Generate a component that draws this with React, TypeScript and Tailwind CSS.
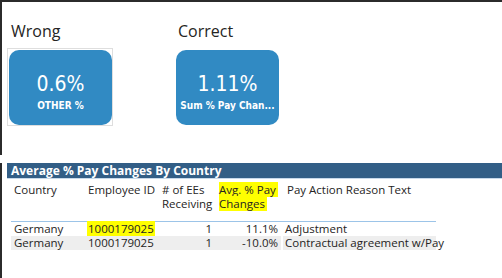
import React from 'react';

const font = { fontFamily: '"Open Sans", "Noto Sans", sans-serif' };

const rows = [
  { country: 'Germany', id: '1000179025', count: '1', avg: '11.1%', reason: 'Adjustment', hl: true, bg: '' },
  { country: 'Germany', id: '1000179025', count: '1', avg: '-10.0%', reason: 'Contractual agreement w/Pay', hl: false, bg: 'bg-[#eeeeee]' },
];

function Card({ value, label, outlined }: { value: string; label: string; outlined?: boolean }) {
  return (
    <div className={`w-[106px] h-[78px] p-px border ${outlined ? 'border-[#dedede]' : 'border-transparent'}`}>
      <div className="w-[103px] h-[75px] rounded-[10px] bg-[#318ac3] flex flex-col items-center text-white pt-[21px] font-['DejaVu_Sans_Condensed',sans-serif]">
        <div className="text-[21px] leading-[26px]">{value}</div>
        <div className="text-[10px] font-bold leading-[14px] mt-[2px] whitespace-nowrap">{label}</div>
      </div>
    </div>
  );
}

export default function App() {
  return (
    <div className="w-[502px] h-[278px] bg-white overflow-hidden border-t-2 border-[#2b2b2b] flex flex-col text-[#252423]" style={font}>
      {/* KPI cards */}
      <div className="h-[153px] border-l-2 border-[#2b2b2b] flex pl-[5px]">
        <div className="w-[167px] pt-[18px]">
          <div className="text-[16px] leading-[22px] pl-[4px] mb-[6px]">Wrong</div>
          <Card value="0.6%" label="OTHER %" outlined />
        </div>
        <div className="pt-[18px]">
          <div className="text-[16px] leading-[22px] pl-[4px] mb-[6px]">Correct</div>
          <Card value="1.11%" label="Sum % Pay Chan..." />
        </div>
      </div>
      <div className="h-[8px]" />
      {/* Table */}
      <div className="flex-1 border-l-2 border-[#2b2b2b] pl-[5px]">
        <div className="h-[15px] bg-[#325e86] text-white font-bold text-[12px] leading-[15px] pl-[4px] whitespace-nowrap">
          Average % Pay Changes By Country
        </div>
        <div className="h-px bg-[#c7d9ea]" />
        <div className="ml-[4px] w-[425px] text-[11.5px]">
          <div className="grid grid-cols-[74px_74px_56px_68px_153px] pt-[4px] h-[43px] leading-[14px] border-b border-[#9cc4e8]">
            <div className="pl-[3px]">Country</div>
            <div className="pl-[3px] whitespace-nowrap">Employee ID</div>
            <div className="pl-[3px] whitespace-nowrap">
              # of EEs
              <br />
              Receiving
            </div>
            <div className="pl-[4px] whitespace-nowrap">
              <span className="bg-[#ffff00] pr-[2px]">Avg. % Pay</span>
              <br />
              <span className="bg-[#ffff00] pr-[2px]">Changes</span>
            </div>
            <div className="pl-[4px] whitespace-nowrap">Pay Action Reason Text</div>
          </div>
          {rows.map((r, i) => (
            <div key={i} className={`grid grid-cols-[74px_74px_56px_68px_153px] h-[14px] leading-[14px] ${r.bg}`}>
              <div className="pl-[3px]">{r.country}</div>
              <div className="pl-[2px]">
                <span className={r.hl ? 'bg-[#ffff00] px-px' : 'px-px'}>{r.id}</span>
              </div>
              <div className="text-right pr-[3px]">{r.count}</div>
              <div className="text-right pr-[3px] border-r-2 border-white">{r.avg}</div>
              <div className="pl-[2px] whitespace-nowrap">{r.reason}</div>
            </div>
          ))}
        </div>
      </div>
    </div>
  );
}
